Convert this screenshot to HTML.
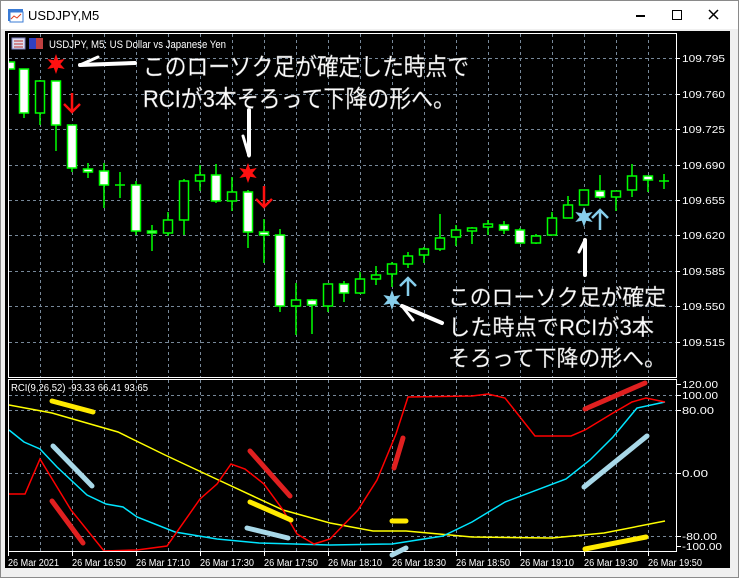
<!DOCTYPE html>
<html><head><meta charset="utf-8"><style>
html,body{margin:0;padding:0;background:#fff;width:739px;height:578px;overflow:hidden}
svg{display:block}
text{font-family:"Liberation Sans","Noto Sans CJK JP",sans-serif}
</style></head><body>
<svg width="739" height="578" viewBox="0 0 739 578" xmlns="http://www.w3.org/2000/svg">
<defs>
<polygon id="st" points="0,-10 2.2,-3.8 8.7,-5 4.4,0 8.7,5 2.2,3.8 0,10 -2.2,3.8 -8.7,5 -4.4,0 -8.7,-5 -2.2,-3.8"/>
<clipPath id="mc"><rect x="9" y="34" width="667" height="343"/></clipPath>
<clipPath id="sc"><rect x="9" y="380" width="668" height="171"/></clipPath>
</defs>
<rect x="0" y="0" width="739" height="578" fill="#fff"/>
<rect x="0.5" y="0.5" width="738" height="577" fill="none" stroke="#8a8a8a"/>
<rect x="8" y="9" width="15" height="12" fill="#3a7bd5"/><rect x="10" y="12" width="13" height="10" fill="#fff" stroke="#3a7bd5"/><polyline points="11,19 14,16 17,18 21,14" fill="none" stroke="#e04020"/>
<text x="28" y="20" font-size="13" fill="#000">USDJPY,M5</text>
<rect x="636" y="15" width="9" height="2" fill="#000"/>
<rect x="672.5" y="10.5" width="9" height="9" fill="none" stroke="#000"/>
<path d="M709,10 L718,19 M718,10 L709,19" stroke="#000" stroke-width="1.5"/>
<rect x="1" y="29" width="737" height="548" fill="#f0f0f0"/>
<rect x="5" y="31" width="725" height="537" fill="#000"/>
<rect x="8.5" y="33.5" width="668" height="344" fill="none" stroke="#fff"/>
<rect x="8.5" y="379.5" width="668" height="172" fill="none" stroke="#fff"/>
<g stroke="#778899" stroke-dasharray="3,3" stroke-width="1">
<path d="M40.5,34V377M72.5,34V377M104.5,34V377M136.5,34V377M168.5,34V377M200.5,34V377M232.5,34V377M264.5,34V377M296.5,34V377M328.5,34V377M360.5,34V377M392.5,34V377M424.5,34V377M456.5,34V377M488.5,34V377M520.5,34V377M552.5,34V377M584.5,34V377M616.5,34V377M648.5,34V377"/>
<path d="M9,58.5H676M9,94.5H676M9,129.5H676M9,165.5H676M9,200.5H676M9,235.5H676M9,271.5H676M9,306.5H676M9,342.5H676"/>
<path d="M40.5,380V551M72.5,380V551M104.5,380V551M136.5,380V551M168.5,380V551M200.5,380V551M232.5,380V551M264.5,380V551M296.5,380V551M328.5,380V551M360.5,380V551M392.5,380V551M424.5,380V551M456.5,380V551M488.5,380V551M520.5,380V551M552.5,380V551M584.5,380V551M616.5,380V551M648.5,380V551"/>
<path d="M9,395.5H676M9,410.5H676M9,473.5H676M9,536.5H676"/>
</g>
<g fill="#fff" font-size="10.5">
<text x="682" y="62" textLength="43" lengthAdjust="spacingAndGlyphs">109.795</text><text x="682" y="98" textLength="43" lengthAdjust="spacingAndGlyphs">109.760</text><text x="682" y="133" textLength="43" lengthAdjust="spacingAndGlyphs">109.725</text><text x="682" y="169" textLength="43" lengthAdjust="spacingAndGlyphs">109.690</text><text x="682" y="204" textLength="43" lengthAdjust="spacingAndGlyphs">109.655</text><text x="682" y="239" textLength="43" lengthAdjust="spacingAndGlyphs">109.620</text><text x="682" y="275" textLength="43" lengthAdjust="spacingAndGlyphs">109.585</text><text x="682" y="310" textLength="43" lengthAdjust="spacingAndGlyphs">109.550</text><text x="682" y="346" textLength="43" lengthAdjust="spacingAndGlyphs">109.515</text>
<text x="682" y="388" textLength="36" lengthAdjust="spacingAndGlyphs">120.00</text><text x="682" y="399" textLength="36" lengthAdjust="spacingAndGlyphs">100.00</text><text x="682" y="414" textLength="32" lengthAdjust="spacingAndGlyphs">80.00</text><text x="682" y="477" textLength="26" lengthAdjust="spacingAndGlyphs">0.00</text><text x="682" y="540" textLength="35" lengthAdjust="spacingAndGlyphs">-80.00</text><text x="682" y="550" textLength="40" lengthAdjust="spacingAndGlyphs">-100.00</text>
</g>
<g stroke="#fff"><path d="M676,58.5h4M676,94.5h4M676,129.5h4M676,165.5h4M676,200.5h4M676,235.5h4M676,271.5h4M676,306.5h4M676,342.5h4M677,384.5h4M677,395.5h4M677,410.5h4M677,473.5h4M677,536.5h4M677,546.5h4"/>
<path d="M8.5,552v4M72.5,552v4M136.5,552v4M200.5,552v4M264.5,552v4M328.5,552v4M392.5,552v4M456.5,552v4M520.5,552v4M584.5,552v4M648.5,552v4"/></g>
<g fill="#fff" font-size="10">
<text x="8" y="566" textLength="51" lengthAdjust="spacingAndGlyphs">26 Mar 2021</text><text x="72" y="566" textLength="54" lengthAdjust="spacingAndGlyphs">26 Mar 16:50</text><text x="136" y="566" textLength="54" lengthAdjust="spacingAndGlyphs">26 Mar 17:10</text><text x="200" y="566" textLength="54" lengthAdjust="spacingAndGlyphs">26 Mar 17:30</text><text x="264" y="566" textLength="54" lengthAdjust="spacingAndGlyphs">26 Mar 17:50</text><text x="328" y="566" textLength="54" lengthAdjust="spacingAndGlyphs">26 Mar 18:10</text><text x="392" y="566" textLength="54" lengthAdjust="spacingAndGlyphs">26 Mar 18:30</text><text x="456" y="566" textLength="54" lengthAdjust="spacingAndGlyphs">26 Mar 18:50</text><text x="520" y="566" textLength="54" lengthAdjust="spacingAndGlyphs">26 Mar 19:10</text><text x="584" y="566" textLength="54" lengthAdjust="spacingAndGlyphs">26 Mar 19:30</text><text x="648" y="566" textLength="54" lengthAdjust="spacingAndGlyphs">26 Mar 19:50</text>
</g>
<rect x="12" y="38" width="13" height="11" fill="#dde" stroke="#8080c0"/><path d="M14,41h9M14,44h9M14,47h9" stroke="#c03030"/>
<rect x="29" y="38" width="7" height="11" fill="#3040c0"/><rect x="36" y="38" width="7" height="11" fill="#c04040"/>
<text x="49" y="48" font-size="11" fill="#fff" textLength="177" lengthAdjust="spacingAndGlyphs">USDJPY, M5:  US Dollar vs Japanese Yen</text>
<text x="11" y="391" font-size="10" fill="#fff" textLength="137" lengthAdjust="spacingAndGlyphs">RCI(9,26,52) -93.33 66.41 93.65</text>
<g clip-path="url(#mc)" stroke="#00ff00" stroke-width="1.5">
<path d="M24,69V118M40,80V125M56,81V151M72,125V172M88,163V178M104,163V208M120,172V198M136,181V235M152,225V251M168,212V236M184,179V235M200,165V191M216,164V203M232,177V211M248,190V248M264,219V263M280,229V312M296,283V335M312,299V334M328,284V312M344,281V302M360,272V294M376,266V285M392,262V287M408,252V268M424,247V263M440,214V251M456,225V246M472,227V244M488,220V235M504,221V234M520,228V243M536,234V244M552,212V235M568,196V218M584,190V205M600,175V199M616,191V211M632,164V197M648,176V192M664,174V189M115,185h10M659,181h10"/>
<g fill="#fff">
<rect x="5.5" y="62" width="9" height="7"/><rect x="19.5" y="69" width="9" height="44"/><rect x="51.5" y="81" width="9" height="44"/><rect x="67.5" y="125" width="9" height="43"/><rect x="83.5" y="169" width="9" height="3"/><rect x="99.5" y="171" width="9" height="14"/><rect x="131.5" y="185" width="9" height="46"/><rect x="147.5" y="231" width="9" height="2"/><rect x="211.5" y="175" width="9" height="26"/><rect x="243.5" y="192" width="9" height="40"/><rect x="259.5" y="232" width="9" height="3"/><rect x="275.5" y="235" width="9" height="71"/><rect x="307.5" y="300" width="9" height="5"/><rect x="339.5" y="284" width="9" height="9"/><rect x="499.5" y="225" width="9" height="5"/><rect x="515.5" y="230" width="9" height="13"/><rect x="595.5" y="191" width="9" height="6"/><rect x="643.5" y="176" width="9" height="4"/>
</g>
<g fill="#000">
<rect x="35.5" y="81" width="9" height="32"/><rect x="163.5" y="220" width="9" height="13"/><rect x="179.5" y="181" width="9" height="39"/><rect x="195.5" y="175" width="9" height="6"/><rect x="227.5" y="192" width="9" height="9"/><rect x="291.5" y="300" width="9" height="6"/><rect x="323.5" y="284" width="9" height="22"/><rect x="355.5" y="279" width="9" height="14"/><rect x="371.5" y="275" width="9" height="4"/><rect x="387.5" y="264" width="9" height="10"/><rect x="403.5" y="256" width="9" height="8"/><rect x="419.5" y="249" width="9" height="6"/><rect x="435.5" y="238" width="9" height="11"/><rect x="451.5" y="230" width="9" height="7"/><rect x="467.5" y="228" width="9" height="3"/><rect x="483.5" y="224" width="9" height="3"/><rect x="531.5" y="236" width="9" height="7"/><rect x="547.5" y="218" width="9" height="17"/><rect x="563.5" y="205" width="9" height="13"/><rect x="579.5" y="190" width="9" height="15"/><rect x="611.5" y="191" width="9" height="6"/><rect x="627.5" y="176" width="9" height="14"/>
</g>
</g>
<g fill="#ff1010"><use href="#st" transform="translate(56,64)"/><use href="#st" transform="translate(248,173)"/></g>
<g fill="none" stroke="#ff1010" stroke-width="2.5"><path d="M72,93V112M64,104L72,112L80,104"/><path d="M264,186V207M256,199L264,207L272,199"/></g>
<g fill="#87ceeb"><use href="#st" transform="translate(392,300)"/><use href="#st" transform="translate(584,217)"/></g>
<g fill="none" stroke="#87ceeb" stroke-width="2.5"><path d="M408,296V278M400,286L408,278L416,286"/><path d="M600,230V210M592,218L600,210L608,218"/></g>
<g fill="none" stroke="#fff" stroke-linecap="round" stroke-linejoin="round">
<path d="M135,63L80,65" stroke-width="4"/><path d="M80,65L98,57" stroke-width="3"/>
<path d="M249,110L249,155" stroke-width="4"/><path d="M249,156L243,136" stroke-width="3"/>
<path d="M442,323L402,306" stroke-width="4"/><path d="M402,306L413,320" stroke-width="3"/>
<path d="M585,275L585,240" stroke-width="4"/><path d="M585,240L579,252" stroke-width="3"/>
</g>
<g fill="#fff" stroke="#999" stroke-width="0.4">
<text x="143" y="75" font-size="24" textLength="326" lengthAdjust="spacingAndGlyphs">このローソク足が確定した時点で</text>
<text x="143" y="107" font-size="24" textLength="312" lengthAdjust="spacingAndGlyphs">RCIが3本そろって下降の形へ。</text>
<text x="448" y="305" font-size="22" textLength="218" lengthAdjust="spacingAndGlyphs">このローソク足が確定</text>
<text x="448" y="335" font-size="22" textLength="206" lengthAdjust="spacingAndGlyphs">した時点でRCIが3本</text>
<text x="448" y="366" font-size="22" textLength="218" lengthAdjust="spacingAndGlyphs">そろって下降の形へ。</text>
</g>
<g clip-path="url(#sc)" fill="none" stroke-width="1.5">
<polyline stroke="#ffff00" points="9,405 52,413 118,432 165,455 212,477 283,510 330,523 373,531 406,531 472,537 552,538 604,533 665,521"/>
<polyline stroke="#00e5ff" points="9,430 24,442 40,449 57,467 87,495 106,504 123,507 137,517 175,532 217,539 259,543 330,545 392,544 443,536 472,522 505,502 566,479 590,460 613,437 637,408 665,402"/>
<polyline stroke="#ff0000" points="9,494 25,494 40,459 71,510 104,551 137,550 167,546 200,499 217,484 231,464 245,469 264,484 283,510 297,534 314,544 330,539 358,510 377,480 396,434 408,397 472,396 488,394 505,398 535,436 571,436 585,430 613,413 632,402 646,398 665,402"/>
</g>
<g fill="none" stroke-width="5" stroke-linecap="round">
<path stroke="#ffea00" d="M52,401L93,412M250,502L291,520M392,521L406,521M585,549L646,537"/>
<path stroke="#e02020" d="M52,501L83,543M250,451L290,496M403,438L394,468M585,409L645,383"/>
<path stroke="#a8d8e8" d="M53,446L92,486M247,528L288,538M392,555L406,548M584,487L647,436"/>
</g>
</svg>
</body></html>
